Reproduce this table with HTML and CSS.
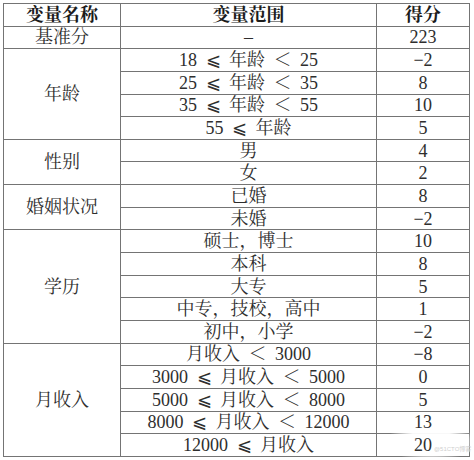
FILE: index.html
```html
<!DOCTYPE html>
<html lang="zh">
<head>
<meta charset="utf-8">
<link rel="stylesheet" href="styles.css">
</head>
<body>
<div class="page">
  <div class="grid">
    <div class="cell head">变量名称</div>
    <div class="cell head">变量范围</div>
    <div class="cell head">得分</div>

    <div class="cell">基准分</div>
    <div class="cell">–</div>
    <div class="cell">223</div>

    <div class="cell span4">年龄</div>
    <div class="cell">18 ⩽ 年龄 ＜ 25</div>
    <div class="cell">−2</div>
    <div class="cell">25 ⩽ 年龄 ＜ 35</div>
    <div class="cell">8</div>
    <div class="cell">35 ⩽ 年龄 ＜ 55</div>
    <div class="cell">10</div>
    <div class="cell">55 ⩽ 年龄</div>
    <div class="cell">5</div>

    <div class="cell span2">性别</div>
    <div class="cell">男</div>
    <div class="cell">4</div>
    <div class="cell">女</div>
    <div class="cell">2</div>

    <div class="cell span2">婚姻状况</div>
    <div class="cell">已婚</div>
    <div class="cell">8</div>
    <div class="cell">未婚</div>
    <div class="cell">−2</div>

    <div class="cell span5">学历</div>
    <div class="cell">硕士，博士</div>
    <div class="cell">10</div>
    <div class="cell">本科</div>
    <div class="cell">8</div>
    <div class="cell">大专</div>
    <div class="cell">5</div>
    <div class="cell">中专，技校，高中</div>
    <div class="cell">1</div>
    <div class="cell">初中，小学</div>
    <div class="cell">−2</div>

    <div class="cell span5">月收入</div>
    <div class="cell">月收入 ＜ 3000</div>
    <div class="cell">−8</div>
    <div class="cell">3000 ⩽ 月收入 ＜ 5000</div>
    <div class="cell">0</div>
    <div class="cell">5000 ⩽ 月收入 ＜ 8000</div>
    <div class="cell">5</div>
    <div class="cell">8000 ⩽ 月收入 ＜ 12000</div>
    <div class="cell">13</div>
    <div class="cell">12000 ⩽ 月收入</div>
    <div class="cell">20</div>
  </div>
  <div class="blot"></div>
  <div class="watermark">@51CTO博客</div>
</div>
</body>
</html>
```

FILE: styles.css
```css
html, body {
  margin: 0;
  padding: 0;
  background: #ffffff;
}

.page {
  position: relative;
  width: 474px;
  height: 460px;
  padding: 3px 0 0 3px;
  box-sizing: border-box;
}

.grid {
  display: grid;
  grid-template-columns: 116px 255px 92px;
  grid-auto-rows: 21.65px;
  gap: 1px;
  padding: 1px;
  width: max-content;
  background: #747474;
  font-family: "Liberation Serif", "Noto Serif CJK SC", "Noto Sans CJK SC", serif;
  font-size: 18px;
  color: #2e2e2e;
}

.cell {
  position: relative;
  z-index: 2;
  background: #ffffff;
  display: flex;
  align-items: center;
  justify-content: center;
  white-space: pre;
  line-height: 1;
  word-spacing: 4px;
}

.head {
  font-weight: bold;
  color: #1c1c1c;
}

.span2 { grid-row: span 2; }
.span4 { grid-row: span 4; }
.span5 { grid-row: span 5; }

.blot {
  position: absolute;
  z-index: 1;
  left: 388px;
  top: 424px;
  width: 86px;
  height: 36px;
  background: radial-gradient(ellipse at center, rgba(255,255,255,0.95) 45%, rgba(255,255,255,0) 75%);
}

.watermark {
  position: absolute;
  z-index: 3;
  left: 434px;
  top: 445px;
  line-height: 9px;
  white-space: nowrap;
  font-family: "Liberation Sans", "Noto Sans CJK SC", sans-serif;
  font-size: 6px;
  color: #cfcfcf;
}
```
